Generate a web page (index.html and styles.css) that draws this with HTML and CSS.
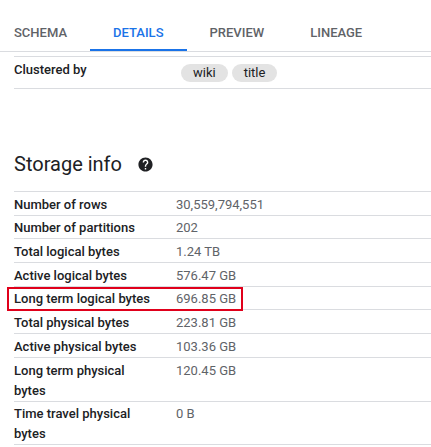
FILE: index.html
```html
<!DOCTYPE html>
<html>
<head>
<meta charset="utf-8">
<link rel="stylesheet" href="styles.css">
</head>
<body>
<nav class="tabs">
  <div class="tab">SCHEMA</div>
  <div class="tab active">DETAILS</div>
  <div class="tab">PREVIEW</div>
  <div class="tab">LINEAGE</div>
</nav>
<div class="content">
  <div class="cluster-row">
    <div class="cluster-label">Clustered by</div>
    <div class="chips">
      <span class="chip">wiki</span>
      <span class="chip">title</span>
    </div>
  </div>

  <h2 class="heading">Storage info
    <svg class="help" viewBox="0 0 24 24" width="17" height="17"><path fill="#202124" d="M12 2C6.48 2 2 6.48 2 12s4.48 10 10 10 10-4.48 10-10S17.52 2 12 2zm1 17h-2v-2h2v2zm2.07-7.750l-.9.92C13.45 12.9 13 13.5 13 15h-2v-.5c0-1.1.45-2.1 1.170-2.83l1.24-1.26c.37-.36.59-.86.59-1.41 0-1.1-.9-2-2-2s-2 .9-2 2H8c0-2.21 1.79-4 4-4s4 1.79 4 4c0 .88-.36 1.680-.93 2.25z"/></svg>
  </h2>

  <div class="table">
    <div class="row"><div class="label">Number of rows</div><div class="value">30,559,794,551</div></div>
    <div class="row"><div class="label">Number of partitions</div><div class="value">202</div></div>
    <div class="row"><div class="label">Total logical bytes</div><div class="value">1.24 TB</div></div>
    <div class="row"><div class="label">Active logical bytes</div><div class="value">576.47 GB</div></div>
    <div class="row highlighted"><div class="label">Long term logical bytes</div><div class="value">696.85 GB</div><div class="mark"></div></div>
    <div class="row"><div class="label">Total physical bytes</div><div class="value">223.81 GB</div></div>
    <div class="row"><div class="label">Active physical bytes</div><div class="value">103.36 GB</div></div>
    <div class="row"><div class="label">Long term physical bytes</div><div class="value">120.45 GB</div></div>
    <div class="row"><div class="label">Time travel physical bytes</div><div class="value">0 B</div></div>
  </div>
</div>
</body>
</html>
```

FILE: styles.css
```css
html, body {
  margin: 0;
  padding: 0;
  background: #ffffff;
  font-family: Roboto, "Liberation Sans", Arial, sans-serif;
  overflow: hidden;
}

.tabs {
  display: flex;
  margin-left: -9px;
  border-bottom: 1px solid #dadce0;
}

.tab {
  padding: 25px 23px 8px;
  font-size: 13px;
  line-height: 16px;
  font-weight: 500;
  color: #5f6368;
  border-bottom: 2px solid transparent;
}

.tab.active {
  color: #1a73e8;
  border-bottom-color: #1a73e8;
}

.content {
  padding-left: 14px;
  margin-top: 4px;
}

.cluster-row {
  display: grid;
  grid-template-columns: 150px 1fr;
  column-gap: 12px;
  border-top: 1px solid #dadce0;
  border-bottom: 1px solid #dadce0;
  padding: 3px 0 6px;
  align-items: start;
}

.cluster-label {
  font-size: 13px;
  line-height: 20px;
  font-weight: 500;
  color: #202124;
}

.chips {
  display: flex;
  gap: 4px;
  margin-top: 4px;
  padding-left: 5px;
}

.chip {
  background: #e3e3e3;
  border-radius: 9px;
  height: 18px;
  line-height: 18px;
  padding: 0 12px;
  font-size: 13px;
  color: #202124;
}

.heading {
  display: flex;
  align-items: center;
  margin: 61px 0 13px;
  font-size: 20px;
  line-height: 28px;
  font-weight: 400;
  color: #202124;
}

.help {
  margin-left: 15px;
}

.table {
  border-top: 1px solid #dadce0;
}

.row {
  position: relative;
  display: grid;
  grid-template-columns: 150px 1fr;
  column-gap: 12px;
  padding-top: 2.7px;
  border-bottom: 1px solid #dadce0;
  font-size: 13px;
  line-height: 20px;
}

.label {
  font-weight: 500;
  color: #202124;
  padding-right: 10px;
}

.value {
  color: #5f6368;
}

.mark {
  position: absolute;
  left: -7px;
  top: 0;
  width: 232px;
  height: 20px;
  border: 2px solid #e0001b;
}
```
